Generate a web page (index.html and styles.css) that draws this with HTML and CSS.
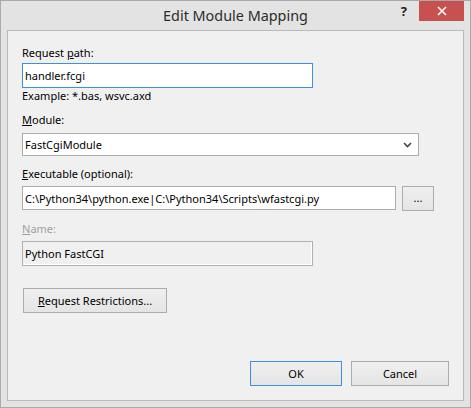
FILE: index.html
```html
<!DOCTYPE html>
<html lang="en">
<head>
    <meta charset="UTF-8">
    <title>Edit Module Mapping</title>
    <link rel="stylesheet" href="styles.css">
</head>
<body>
    <div class="window">
        <div class="titlebar">
            <span></span>
            <h1 class="title">Edit Module Mapping</h1>
            <div class="controls">
                <span class="help">?</span>
                <span class="close">
                    <svg width="10" height="10" viewBox="0 0 10 10">
                        <path d="M1 1 L9 9 M9 1 L1 9" stroke="#fff" stroke-width="1.6" fill="none"/>
                    </svg>
                </span>
            </div>
        </div>
        <div class="client">
            <label class="label first">Request <u>p</u>ath:</label>
            <input class="field path focused" type="text" value="handler.fcgi">
            <div class="hint">Example: *.bas, wsvc.axd</div>

            <label class="label module-label"><u>M</u>odule:</label>
            <div class="select">
                <span>FastCgiModule</span>
                <svg class="chevron" width="9" height="6" viewBox="0 0 9 6">
                    <path d="M1 1 L4.5 4.5 L8 1" stroke="#444" stroke-width="1.6" fill="none"/>
                </svg>
            </div>

            <label class="label spaced"><u>E</u>xecutable (optional):</label>
            <div class="exec-row">
                <input class="field exec" type="text" value="C:\Python34\python.exe|C:\Python34\Scripts\wfastcgi.py">
                <button class="btn browse">...</button>
            </div>

            <label class="label spaced disabled"><u>N</u>ame:</label>
            <input class="field name" type="text" value="Python FastCGI" disabled>

            <button class="btn restrictions"><u>R</u>equest Restrictions...</button>

            <div class="footer">
                <button class="btn ok">OK</button>
                <button class="btn cancel">Cancel</button>
            </div>
        </div>
    </div>
</body>
</html>
```

FILE: styles.css
```css
:root {
    --frame: #e3e3e3;
    --frame-border: #aaaaaa;
    --client-bg: #f0f0f0;
    --client-border: #b9b9b9;
    --field-border: #acacac;
    --focus-blue: #3c8fe5;
    --close-red: #c75050;
}

* {
    box-sizing: border-box;
}

body {
    margin: 0;
    font-family: "Noto Sans", "Open Sans", sans-serif;
    font-size: 11px;
    color: #000;
    background: #fff;
}

.window {
    width: 471px;
    height: 408px;
    background: var(--frame);
    border: 1px solid var(--frame-border);
    padding: 0 6px 6px 6px;
    display: flex;
    flex-direction: column;
}

/* title bar */
.titlebar {
    height: 29px;
    display: grid;
    grid-template-columns: 1fr auto 1fr;
    margin: 0 -6px;
}

.title {
    margin: 0;
    font-weight: 400;
    font-size: 14.4px;
    line-height: 29px;
    color: #2b2b2b;
}

.controls {
    justify-self: end;
    display: flex;
    align-items: flex-start;
    margin-right: 6px;
}

.help {
    font-weight: 700;
    font-size: 13px;
    color: #222;
    line-height: 20px;
    margin-right: 12px;
}

.close {
    width: 45px;
    height: 20px;
    background: var(--close-red);
    display: flex;
    align-items: center;
    justify-content: center;
}

/* dialog body */
.client {
    flex: 1;
    background: var(--client-bg);
    border: 1px solid var(--client-border);
    padding: 14px;
    display: flex;
    flex-direction: column;
    align-items: flex-start;
}

.label {
    display: block;
    line-height: 16px;
}

.label.module-label {
    margin-top: 8px;
}

.label.spaced {
    margin-top: 10px;
}

.label.disabled {
    color: #a0a0a0;
}

.field {
    font-family: inherit;
    font-size: 11px;
    color: #000;
    background: #fff;
    border: 1px solid var(--field-border);
    padding: 0 2px;
    margin: 4px 0 0 0;
    outline: none;
}

.field.path {
    width: 291px;
    height: 25px;
    margin-top: 2px;
}

.field.focused {
    border-color: var(--focus-blue);
}

.hint {
    line-height: 16px;
}

.select {
    width: 397px;
    height: 23px;
    margin-top: 5px;
    background: #fff;
    border: 1px solid var(--field-border);
    padding: 0 6px 0 2px;
    display: flex;
    align-items: center;
    justify-content: space-between;
}

.exec-row {
    display: flex;
    gap: 6px;
    margin-top: 4px;
}

.field.exec {
    width: 374px;
    height: 24px;
    margin: 0;
}

.field.name {
    width: 291px;
    height: 25px;
    background: var(--client-bg);
    border-color: #b0b0b0;
    box-shadow: inset -1px -1px 0 #fff;
}

.btn {
    font-family: inherit;
    font-size: 11px;
    color: #000;
    background: linear-gradient(#efefef, #e5e5e5);
    border: 1px solid var(--field-border);
    height: 25px;
    padding: 0;
    margin: 0;
}

.btn.browse {
    width: 32px;
    padding-bottom: 2px;
}

.btn.restrictions {
    width: 144px;
    margin-top: 22px;
    margin-left: 1px;
}

.footer {
    margin-top: auto;
    align-self: flex-end;
    display: flex;
    gap: 9px;
}

.btn.ok {
    width: 92px;
    border-color: var(--focus-blue);
}

.btn.cancel {
    width: 98px;
}
```
